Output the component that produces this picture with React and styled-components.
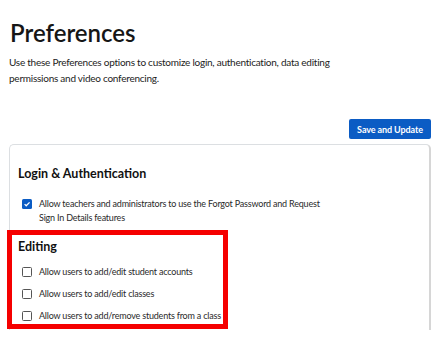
import React, { useState } from "react";
import styled, { createGlobalStyle } from "styled-components";

const GlobalStyle = createGlobalStyle`
  html, body {
    margin: 0;
    padding: 0;
    background: #ffffff;
  }
  body {
    font-family: Lato, "Liberation Sans", Arial, sans-serif;
    color: #1d1d1f;
    -webkit-font-smoothing: antialiased;
  }
`;

const Page = styled.div`
  width: 439px;
  height: 341px;
  overflow: hidden;
  padding: 17px 8px 0 9px;
  box-sizing: border-box;
  display: flex;
  flex-direction: column;
`;

const Title = styled.h1`
  margin: 0 0 0 1px;
  font-size: 24px;
  line-height: 32px;
  font-weight: 600;
  color: #161616;
`;

const Desc = styled.p`
  margin: 5px 0 0;
  font-size: 10px;
  line-height: 16px;
  letter-spacing: -0.25px;
  color: #222;
`;

const Actions = styled.div`
  display: flex;
  justify-content: flex-end;
  margin-top: 33px;
`;

const Button = styled.button`
  height: 20px;
  width: 82px;
  padding: 0;
  border: none;
  border-radius: 2px;
  background: #0b5cc4;
  color: #fff;
  font-family: inherit;
  font-size: 9px;
  font-weight: 700;
  letter-spacing: -0.1px;
  cursor: pointer;
`;

const Card = styled.section`
  margin-top: 5px;
  flex: 1;
  border: 1px solid #dcdfe2;
  border-bottom: none;
  border-right: 2px solid #d6d6d6;
  border-radius: 5px 5px 0 0;
  padding: 21px 8px 0;
  margin-bottom: 11px;
`;

const Group = styled.div`
  position: relative;
  width: fit-content;
  margin-bottom: ${({ $gap }) => $gap || 0}px;

  ${({ $marked }) =>
    $marked &&
    `
    &::before {
      content: "";
      position: absolute;
      left: -11px;
      right: -7px;
      top: -9px;
      bottom: -6px;
      border: 5px solid #f50000;
      pointer-events: none;
    }
  `}
`;

const GroupTitle = styled.h2`
  margin: 0 0 ${({ $space }) => $space}px;
  font-size: 12.5px;
  line-height: 16px;
  font-weight: 700;
  color: #111;
`;

const Option = styled.label`
  display: flex;
  align-items: flex-start;
  gap: 7px;
  padding-left: 4px;
  margin-bottom: 8px;
  font-size: 9px;
  line-height: 14px;
  letter-spacing: -0.2px;
  color: #2a2a2a;
  cursor: pointer;

  &:last-child {
    margin-bottom: 0;
  }
`;

const Box = styled.span`
  flex: none;
  width: 10px;
  height: 10px;
  margin-top: 2px;
  box-sizing: border-box;
  border-radius: 1.5px;
  border: ${({ $on }) => ($on ? "none" : "1.3px solid #555")};
  background: ${({ $on }) => ($on ? "#0b5cc4" : "#fff")};
  display: flex;
  align-items: center;
  justify-content: center;
`;

const OptionText = styled.span`
  display: block;
  max-width: 285px;
`;

const Check = ({ on, onToggle, children }) => (
  <Option onClick={onToggle}>
    <Box $on={on}>
      {on && (
        <svg width="8" height="8" viewBox="0 0 10 10">
          <path d="M2 5.2l2 2L8.2 3" fill="none" stroke="#fff" strokeWidth="1.6" />
        </svg>
      )}
    </Box>
    <OptionText>{children}</OptionText>
  </Option>
);

const App = () => {
  const [prefs, setPrefs] = useState({
    forgot: true,
    students: false,
    classes: false,
    roster: false,
  });
  const toggle = (key) => (e) => {
    e.preventDefault();
    setPrefs({ ...prefs, [key]: !prefs[key] });
  };

  return (
    <>
      <GlobalStyle />
      <Page>
        <Title>Preferences</Title>
        <Desc>
          Use these Preferences options to customize login, authentication, data editing
          <br />
          permissions and video conferencing.
        </Desc>
        <Actions>
          <Button>Save and Update</Button>
        </Actions>
        <Card>
          <Group $gap={14}>
            <GroupTitle $space={15}>Login &amp; Authentication</GroupTitle>
            <Check on={prefs.forgot} onToggle={toggle("forgot")}>
              Allow teachers and administrators to use the Forgot Password and Request
              Sign In Details features
            </Check>
          </Group>
          <Group $marked>
            <GroupTitle $space={10}>Editing</GroupTitle>
            <Check on={prefs.students} onToggle={toggle("students")}>
              Allow users to add/edit student accounts
            </Check>
            <Check on={prefs.classes} onToggle={toggle("classes")}>
              Allow users to add/edit classes
            </Check>
            <Check on={prefs.roster} onToggle={toggle("roster")}>
              Allow users to add/remove students from a class
            </Check>
          </Group>
        </Card>
      </Page>
    </>
  );
};

export default App;
